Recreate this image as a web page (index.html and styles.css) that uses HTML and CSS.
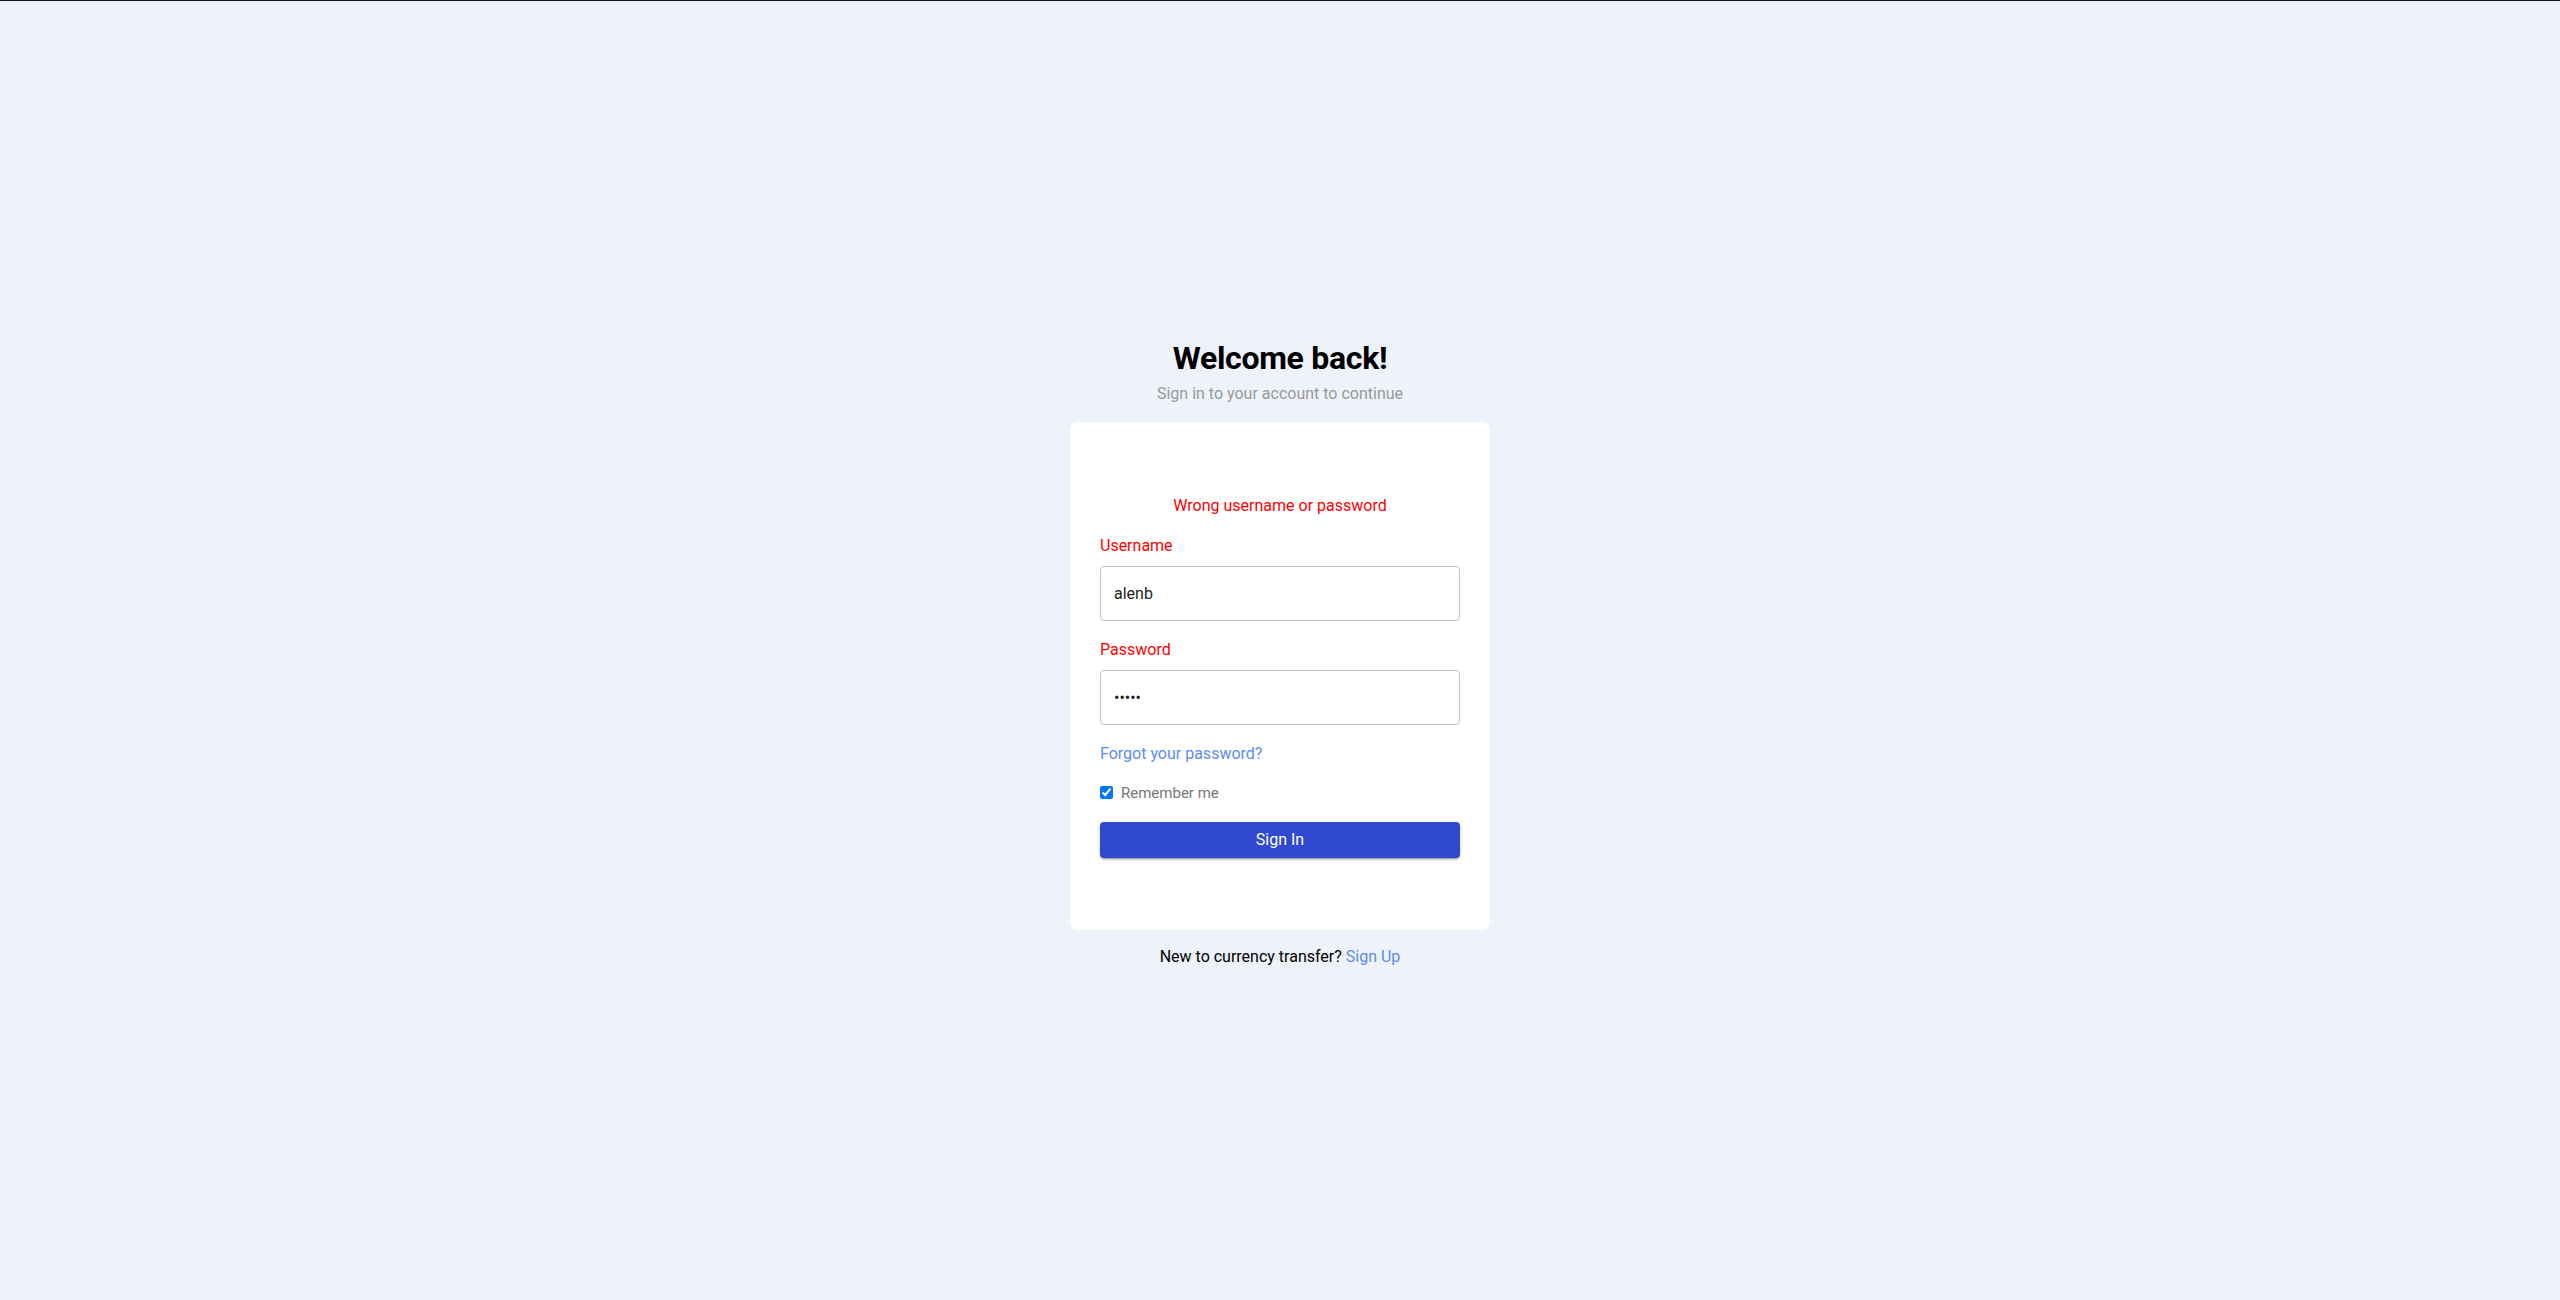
FILE: index.html
```html
<!DOCTYPE html>
<html lang="en">
<head>
<meta charset="utf-8">
<title>Sign in</title>
<link rel="stylesheet" href="styles.css">
</head>
<body>
<div class="topline"></div>
<main class="page">
  <div class="auth">
    <h1 class="title">Welcome back!</h1>
    <p class="subtitle">Sign in to your account to continue</p>
    <div class="card">
      <form class="form">
        <p class="error">Wrong username or password</p>
        <label class="label" for="username">Username</label>
        <input class="input" id="username" type="text" value="alenb">
        <label class="label" for="password">Password</label>
        <input class="input" id="password" type="password" value="12345">
        <a class="forgot" href="#">Forgot your password?</a>
        <label class="remember"><input type="checkbox" class="check" checked> Remember me</label>
        <button type="button" class="btn">Sign In</button>
      </form>
    </div>
    <p class="footer">New to currency transfer? <a href="#" class="link">Sign Up</a></p>
  </div>
</main>
</body>
</html>
```
FILE: styles.css
```css
html, body {
  margin: 0;
  padding: 0;
}
body {
  background: #eef2fa;
  font-family: Roboto, "Liberation Sans", sans-serif;
  font-size: 16px;
  line-height: 24px;
  color: #000;
  height: 1300px;
  display: flex;
  flex-direction: column;
}
.topline {
  height: 1px;
  background: #111318;
  flex: none;
}
.page {
  flex: 1;
  display: flex;
  align-items: center;
  justify-content: center;
  padding-top: 6px;
}
.auth {
  width: 420px;
  display: flex;
  flex-direction: column;
  align-items: center;
}
.title {
  margin: 0;
  font-size: 32px;
  line-height: 38px;
  font-weight: 700;
  letter-spacing: -0.3px;
}
.subtitle {
  margin: 5px 0 0;
  color: #999;
}
.card {
  margin-top: 16px;
  width: 100%;
  box-sizing: border-box;
  background: #fff;
  border-radius: 8px;
  padding: 72px 30px;
}
.form {
  display: flex;
  flex-direction: column;
}
.error {
  margin: 0 0 16px;
  color: #ff0000;
  text-align: center;
}
.label {
  color: #ff0000;
  margin-bottom: 8px;
}
.input {
  box-sizing: border-box;
  height: 55px;
  border: 1px solid #c4c4c4;
  border-radius: 4px;
  padding: 0 13px;
  font-family: inherit;
  font-size: 16px;
  color: #222;
  margin-bottom: 17px;
  outline: none;
}
.forgot {
  color: #5b8cf5;
  text-decoration: none;
  align-self: flex-start;
}
.remember {
  margin-top: 15px;
  display: flex;
  align-items: center;
  color: #777;
  font-size: 15px;
}
.check {
  margin: 0 8px 0 0;
  width: 13px;
  height: 13px;
}
.btn {
  margin-top: 17px;
  height: 36px;
  border: none;
  border-radius: 4px;
  background: #3049cf;
  color: #fff;
  font-family: inherit;
  font-size: 16px;
  box-shadow: 0 3px 1px -2px rgba(0,0,0,.2), 0 2px 2px 0 rgba(0,0,0,.14), 0 1px 5px 0 rgba(0,0,0,.12);
}
.footer {
  margin: 15px 0 0;
}
.link {
  color: #5b8cf5;
  text-decoration: none;
}
```
